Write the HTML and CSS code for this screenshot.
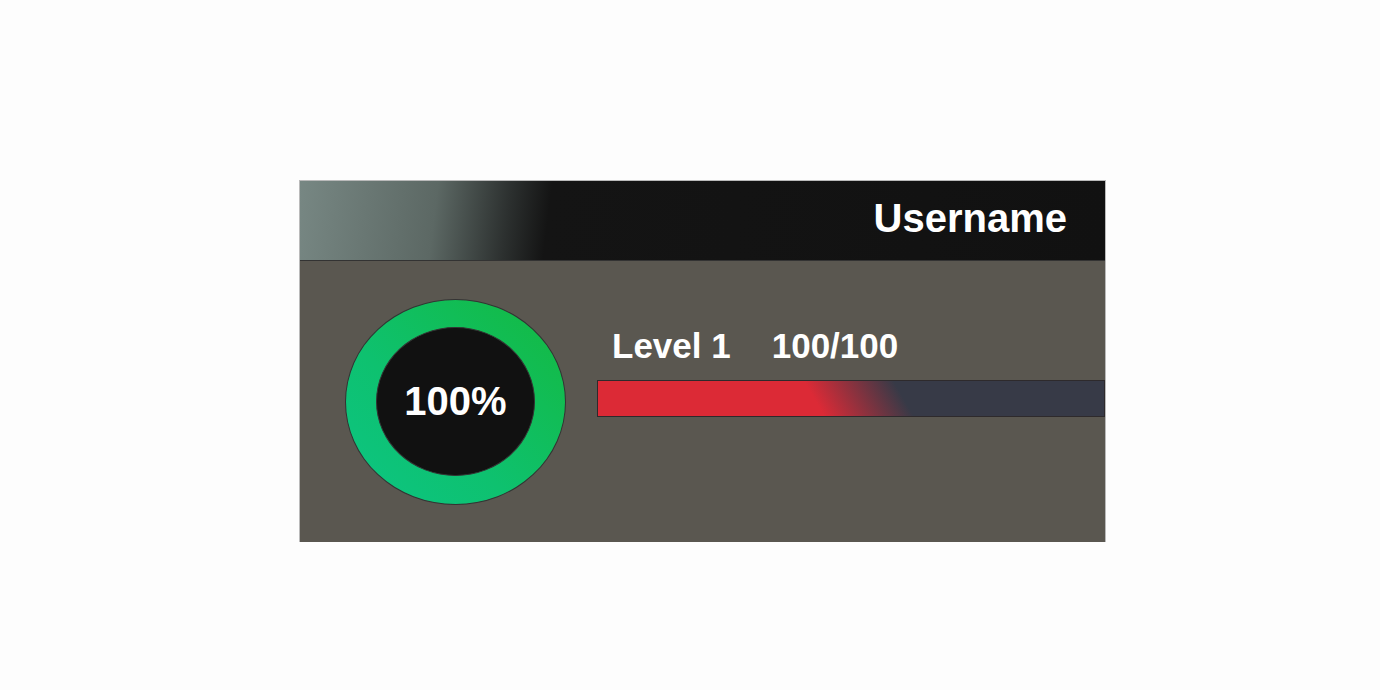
FILE: index.html
```html
<!DOCTYPE html>
<html lang="en">
<head>
    <meta charset="UTF-8">
    <meta name="viewport" content="width=device-width, initial-scale=1.0">
    <title>Player Card</title>
    <link rel="stylesheet" href="styles.css">
</head>
<body>
    <div class="card">
        <header class="card-header">
            <h2>Username</h2>
        </header>
        <div class="card-body">
            <div class="ring">
                <div class="ring-inner">100%</div>
            </div>
            <div class="info">
                <div class="info-text">
                    <span>Level 1</span>
                    <span>100/100</span>
                </div>
                <div class="bar"></div>
            </div>
        </div>
    </div>
</body>
</html>
```

FILE: styles.css
```css
body {
    margin: 0;
    font-family: 'Liberation Sans', Arial, sans-serif;
    background-color: #fdfdfd;
    padding-top: 181px;
}

.card {
    width: 805px;
    margin-left: 300px;
    background-color: #5a5750;
    box-shadow: 0 0 0 1px rgba(60, 60, 60, 0.35);
}

.card-header {
    height: 79px;
    border-bottom: 1px solid #333;
    background: linear-gradient(97deg, #778783 0%, #5c6864 17%, #2c302f 26%, #141414 31%, #111 100%);
    display: flex;
    align-items: center;
    justify-content: flex-end;
    padding-right: 38px;
}

.card-header h2 {
    margin: 0 0 4px;
    color: white;
    font-size: 40px;
    font-weight: bold;
}

.card-body {
    height: 281px;
    display: flex;
    align-items: center;
    padding-left: 45px;
}

.ring {
    width: 219px;
    height: 204px;
    border: 1px solid #333;
    border-radius: 50%;
    background: linear-gradient(45deg, #0cc584 0%, #0ec16f 40%, #14b93f 100%);
    display: flex;
    align-items: center;
    justify-content: center;
    flex-shrink: 0;
}

.ring-inner {
    width: 157px;
    height: 147px;
    border: 1px solid #333;
    border-radius: 50%;
    background-color: #111;
    color: white;
    font-size: 40px;
    font-weight: bold;
    display: flex;
    align-items: center;
    justify-content: center;
}

.info {
    flex: 1;
    align-self: flex-start;
    padding-top: 65px;
    margin-left: 31px;
}

.info-text {
    display: flex;
    gap: 41px;
    padding-left: 15px;
    color: white;
    font-size: 35px;
    font-weight: bold;
    line-height: 40px;
}

.bar {
    margin-top: 14px;
    height: 35px;
    border: 1px solid #2e2a2c;
    background: linear-gradient(60deg, #dc2a36 43%, #373a47 60%);
}
```
